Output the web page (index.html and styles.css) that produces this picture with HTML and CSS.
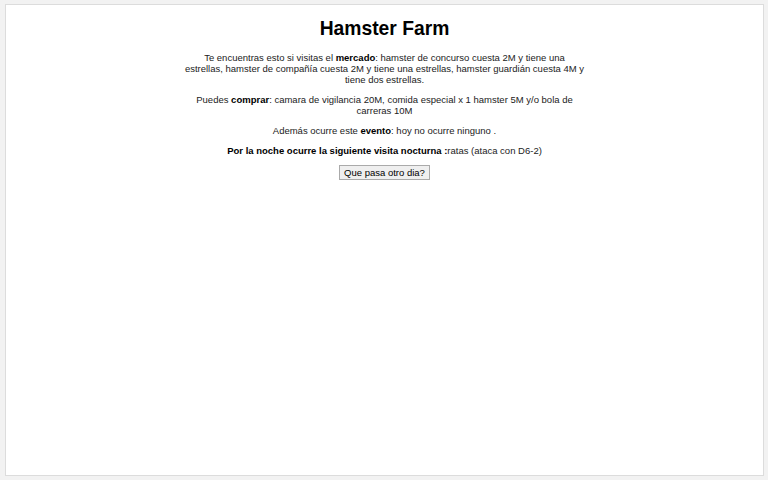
FILE: index.html
```html
<!DOCTYPE html>
<html lang="es">
<head>
    <meta charset="UTF-8">
    <title>Hamster Farm</title>
    <link rel="stylesheet" href="styles.css">
</head>
<body>
    <div class="page">
        <div class="content">
            <h1>Hamster Farm</h1>
            <p>Te encuentras esto si visitas el <strong>mercado</strong>: hamster de concurso cuesta 2M y tiene una estrellas, hamster de compañía cuesta 2M y tiene una estrellas, hamster guardián cuesta 4M y tiene dos estrellas.</p>
            <p>Puedes <strong>comprar</strong>: camara de vigilancia 20M, comida especial x 1 hamster 5M y/o bola de carreras 10M</p>
            <p>Además ocurre este <strong>evento</strong>: hoy no ocurre ninguno .</p>
            <p><strong>Por la noche ocurre la siguiente visita nocturna :</strong>ratas (ataca con D6-2)</p>
            <button class="next-day">Que pasa otro dia?</button>
        </div>
    </div>
</body>
</html>
```

FILE: styles.css
```css
html, body { height: 100%; }
body { margin: 0; padding: 4px 4px 4px 5px; box-sizing: border-box; background-color: #f2f2f2; font-family: "Liberation Sans", Arial, sans-serif; color: #222; }
.page { height: 100%; box-sizing: border-box; background-color: #fff; border: 1px solid #dcdcdc; }
.content { max-width: 400px; margin: 0 auto; text-align: center; font-size: 9.5px; }
h1 { font-size: 19.3px; line-height: 22px; margin: 13px 0 12px; color: #000; }
p { margin: 0 0 9px; }
strong { color: #000; }
.next-day { font-family: "Liberation Sans", Arial, sans-serif; font-size: 9.5px; padding: 1px 4px; background-color: #efefef; border: 1px solid #aaa; border-radius: 0; color: #000; }
```
